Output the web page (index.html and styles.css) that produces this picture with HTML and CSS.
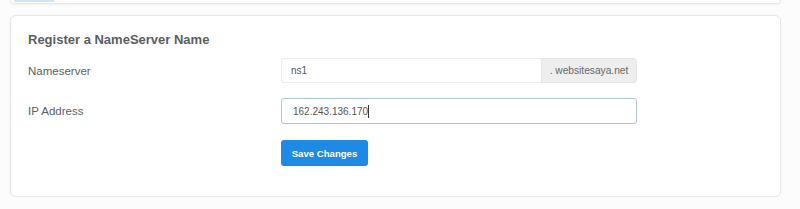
FILE: index.html
```html
<!DOCTYPE html>
<html lang="en">
<head>
    <meta charset="UTF-8">
    <title>Register a NameServer Name</title>
    <link rel="stylesheet" href="styles.css">
</head>
<body>
    <div class="prev-card">
        <div class="prev-tab"></div>
    </div>
    <div class="card">
        <h3>Register a NameServer Name</h3>
        <div class="form-row">
            <label for="ns">Nameserver</label>
            <div class="input-group">
                <input type="text" id="ns" value="ns1">
                <span class="addon">. websitesaya.net</span>
            </div>
        </div>
        <div class="form-row last">
            <label for="ip">IP Address</label>
            <div class="field focused">
                <span class="value">162.243.136.170</span><span class="caret"></span>
            </div>
        </div>
        <div class="form-row">
            <span></span>
            <div>
                <button class="save-button">Save Changes</button>
            </div>
        </div>
    </div>
</body>
</html>
```

FILE: styles.css
```css
body {
    font-family: 'Liberation Sans', Arial, sans-serif;
    background: #fcfcfc;
    margin: 0;
    padding: 0;
    color: #555;
}
.prev-card {
    margin: 0 19px 0 10px;
    height: 3px;
    background: #fff;
    border: 1px solid #e6e9ec;
    border-top: none;
    border-radius: 0 0 6px 6px;
    box-shadow: 0 1px 3px rgba(0, 0, 0, 0.05);
    position: relative;
}
.prev-tab {
    position: absolute;
    left: 3px;
    top: 0;
    width: 40px;
    height: 2px;
    background: #cfe3f3;
}
.card {
    margin: 11px 19px 0 10px;
    background: #fff;
    border: 1px solid #e6e6e6;
    border-radius: 6px;
    box-shadow: 0 1px 4px rgba(0, 0, 0, 0.04);
    padding: 15px 18px 28px 17px;
    height: 137px;
}
.card h3 {
    margin: 0 0 9px 0;
    font-size: 13px;
    line-height: 18px;
    font-weight: 700;
    color: #5b5e63;
}
.form-row {
    display: grid;
    grid-template-columns: 253px 356px;
    align-items: center;
    margin-bottom: 15px;
}
.form-row.last {
    margin-bottom: 16px;
}
.form-row label {
    font-size: 11.5px;
    color: #5b5e63;
}
.input-group {
    display: flex;
    height: 25px;
}
.input-group input {
    flex: 1;
    min-width: 0;
    border: 1px solid #ececec;
    border-right: none;
    border-radius: 3px 0 0 3px;
    padding: 0 9px;
    font-family: inherit;
    font-size: 10px;
    color: #555;
    outline: none;
}
.addon {
    width: 96px;
    background: #eeeeee;
    border: 1px solid #e6e6e6;
    border-radius: 0 3px 3px 0;
    font-size: 10.2px;
    color: #666;
    display: flex;
    align-items: center;
    justify-content: center;
    box-sizing: border-box;
}
.field {
    height: 26px;
    box-sizing: border-box;
    border: 1px solid #a9c6d3;
    border-radius: 3px;
    padding: 0 10px 0 11px;
    display: flex;
    align-items: center;
    font-size: 10px;
    color: #555;
    background: #fff;
}
.caret {
    display: inline-block;
    width: 1px;
    height: 13px;
    background: #333;
}
.save-button {
    background: #1e8ae8;
    color: #fff;
    border: none;
    border-radius: 3px;
    height: 26px;
    width: 87px;
    padding: 0;
    font-family: inherit;
    font-size: 9.6px;
    font-weight: 700;
    cursor: pointer;
}
```
